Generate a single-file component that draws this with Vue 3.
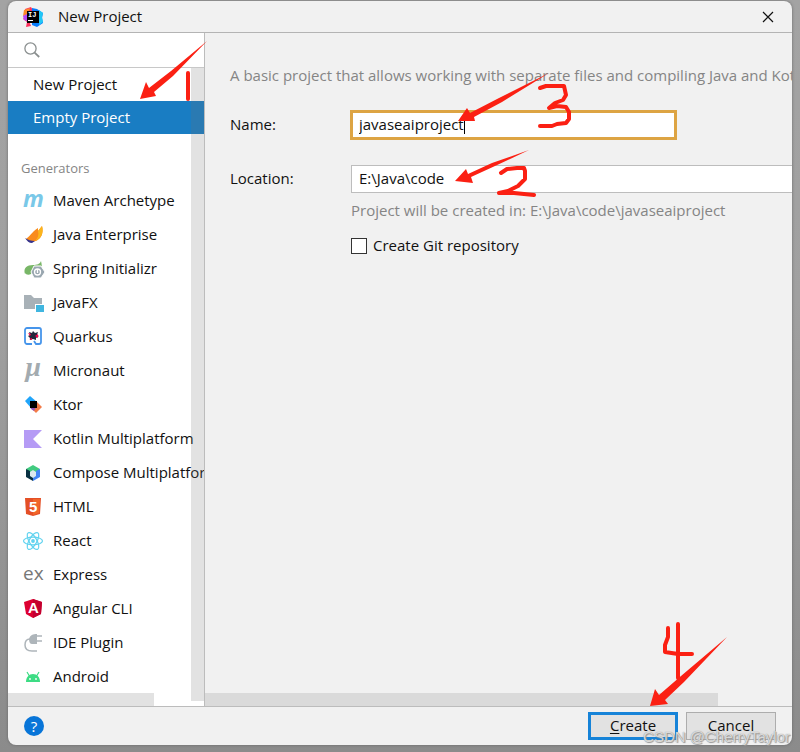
<template>
  <div class="desktop">
    <main class="window">
      <header class="titlebar">
        <svg class="app-logo" viewBox="0 0 20 20" aria-hidden="true">
          <path fill="#fe315d" d="M2 2 8 0l3 5-5 9 2 5-5 1 1-5-4-3 3-4z" />
          <path fill="#fc8a2c" d="M1 3 7 1 5 8 0 9z" />
          <path fill="#b74af7" d="M0 9 4 7v7l-3-1z" />
          <path fill="#087cfa" d="m9 1 5 1 6 4-1 5 1 5-6 4-5-2z" />
          <path fill="#21c7f5" d="m16 3 4 3-1 4 1 5-4 3z" />
          <path d="M4 4h12v12H4z" />
          <text x="5" y="10" font-size="7" font-weight="700" font-family="Liberation Mono, monospace" fill="#fff">IJ</text>
          <path fill="#fff" d="M5 13h5v1H5z" />
        </svg>
        <h1>New Project</h1>
        <button class="close" type="button" aria-label="Close">
          <svg viewBox="0 0 12 12"><path d="m1 1 10 10M11 1 1 11" fill="none" stroke="#111" stroke-width="1.2" /></svg>
        </button>
      </header>

      <div class="body">
        <aside class="sidebar">
          <label class="search">
            <svg viewBox="0 0 16 16" fill="none" stroke="#8a8f8f" stroke-width="1.3">
              <circle cx="6.5" cy="6.5" r="5.6" />
              <path d="m10.6 10.6 4.6 4.4" stroke-width="1.8" />
            </svg>
            <input v-model="query" type="text" aria-label="Search" />
          </label>
          <nav class="list">
            <button
              v-for="kind in kinds"
              :key="kind"
              type="button"
              :class="['kind', { selected: kind === current }]"
              @click="current = kind"
            >
              {{ kind }}
            </button>
            <h2>Generators</h2>
            <button v-for="item in generators" :key="item.name" class="generator" type="button" @click="current = item.name">
              <svg viewBox="0 0 20 20" aria-hidden="true" v-html="item.icon"></svg>
              <span>{{ item.name }}</span>
            </button>
            <i class="bar vertical"></i>
            <i class="bar horizontal"></i>
          </nav>
        </aside>

        <section class="content">
          <p class="hint intro">A basic project that allows working with separate files and compiling Java and Kotlin classes.</p>
          <form class="form" @submit.prevent>
            <label for="name">Name:</label>
            <div class="field name-field">
              <input id="name" v-model="name" type="text" />
              <i class="caret"></i>
            </div>
            <label for="location">Location:</label>
            <div class="field location-field">
              <input id="location" v-model="location" type="text" />
            </div>
            <p class="hint created">Project will be created in: {{ location }}\{{ name }}</p>
            <label class="git"><input v-model="git" type="checkbox" /><span>Create Git repository</span></label>
          </form>
          <i class="bar wide"></i>
        </section>
      </div>

      <footer class="footer">
        <button class="help" type="button" aria-label="Help">?</button>
        <div class="actions">
          <button class="action primary" type="button"><u>C</u>reate</button>
          <button class="action" type="button">Cancel</button>
          <svg class="note-create" viewBox="650 620 80 90" aria-hidden="true">
            <g class="pen">
              <path d="M668 628v9l-3 8v7l13 2h14M678 624v54" />
            </g>
            <path class="arrow" d="m650 706 5-17 4 6 22-19 46-39-43 45-19 18 3 4z" />
          </svg>
        </div>
      </footer>

      <svg class="notes" viewBox="0 0 600 220" aria-hidden="true">
        <g class="pen">
          <path d="M188 73v26" />
          <path d="m501 173 6-4 10-1h7l1 3v8l-7 7-10 5-9 2h15l20 2" />
          <path d="m540 88 6-2h18l2 9-3 5-8 3-6 5 8-2 9 1 3 5v7l-3 4-9 1-5 2h-12" />
        </g>
        <path class="arrow" d="m140 99 6-17 3 6 22-17 36-30-34 35-19 16 2 4z" />
        <path class="arrow" d="m455 181 11-12 2 5 24-11 37-13-34 16-24 11 2 6z" />
        <path class="arrow" d="m458 121 9-13 3 5 29-15 50-25-47 29-28 15 1 4z" />
      </svg>
    </main>
    <span class="watermark">CSDN @CherryTaylor</span>
  </div>
</template>

<script setup>
import { ref } from 'vue'

const query = ref('')
const name = ref('javaseaiproject')
const location = ref('E:\\Java\\code')
const git = ref(false)

const kinds = ['New Project', 'Empty Project']
const current = ref('Empty Project')

const generators = [
  {
    name: 'Maven Archetype',
    icon: '<text x="-1" y="16" font-size="23" font-style="italic" font-weight="700" font-family="Open Sans, sans-serif" fill="#79c8e8">m</text>',
  },
  {
    name: 'Java Enterprise',
    icon: '<path fill="#f98b1d" d="M2 14C7 10 10 5 14 3v3l4-5c2 7-1 13-6 15-4 1-7 0-10-2z"/><path fill="#fbb51c" d="m14 6 4-5c2 7-1 13-7 15 3-3 4-6 3-10z"/><path fill="#35328c" d="M1 13c3 2 6 3 10 3l-3 2c-3 0-5-2-7-5z"/>',
  },
  {
    name: 'Spring Initializr',
    icon: '<path fill="#78b667" d="M1 15C-1 9 3 6 9 6c4 0 7-1 8-4 1 4 1 6 0 8l-6-1-4 6c-2 1-5 1-6-1z"/><path fill="#9aa7b0" stroke="#fff" d="m10 7h7l4 6-4 6h-7l-3-6z"/><circle cx="13.5" cy="13" r="3" fill="none" stroke="#fff" stroke-width="1.3"/><path stroke="#fff" stroke-width="1.4" d="M13.5 10v4"/>',
  },
  {
    name: 'JavaFX',
    icon: '<path fill="#a8b1b7" d="M0 2h7l3 3h8v6h-7v5H0z"/><path fill="#40b6e0" d="M12 12h8v7h-8z"/>',
  },
  {
    name: 'Quarkus',
    icon: '<path fill="none" stroke="#4695eb" stroke-width="1.8" d="M8 17H3c-1 0-2-1-2-2V3c0-1 1-2 2-2h12c1 0 2 1 2 2v12c0 1-1 2-2 2h-3l-2-3"/><path fill="#25283d" d="m9 4 2 2 3-1-1 3 2 1-3 2v2l-3-1-3 1v-2L4 9l2-1-1-3 3 1z"/><path fill="#ff004a" d="M4 6l3 1-1 2zM14 7v4l-3-2zM5 12l3-1v2z"/>',
  },
  {
    name: 'Micronaut',
    icon: '<text x="1" y="15" font-size="28" font-style="italic" font-weight="700" font-family="Liberation Serif, serif" fill="#a3abb0">µ</text>',
  },
  {
    name: 'Ktor',
    icon: '<path fill="#21a5fa" d="m1 6 5-5 7 6-6 6z"/><path fill="#f47b48" d="m7 13 6-6 5 5-6 6z"/><path fill="#9254b9" d="m6 12 1 2 3 2 2-4z"/><path d="M6 6h7v7H6z"/>',
  },
  {
    name: 'Kotlin Multiplatform',
    icon: '<path fill="#b59bf5" d="M0 1h18l-9 9 9 9H0z"/>',
  },
  {
    name: 'Compose Multiplatform',
    icon: '<path fill="#42cb80" d="m9 2 7 4-3 4-4-2-4 2-3-4z"/><path fill="#083042" d="m2 6 4 2v4l3 2v4l-7-4z"/><path fill="#4285f4" d="m16 6-4 2v4l-3 2v4l7-4z"/><path fill="#dce9ef" d="m9 7 3 2v4l-3 2-3-2V9z"/>',
  },
  {
    name: 'HTML',
    icon: '<path fill="#e44f26" d="M1 1h16l-1 16-7 2-7-2z"/><path fill="#f16529" d="M9 2h7l-1 14-6 2z"/><text x="5" y="15" font-size="15" font-weight="700" font-family="Liberation Sans, sans-serif" fill="#fff">5</text>',
  },
  {
    name: 'React',
    icon: '<g fill="none" stroke="#61d3ef" stroke-width="1.2"><ellipse cx="9" cy="10" rx="9.5" ry="3.8"/><ellipse cx="9" cy="10" rx="9.5" ry="3.8" transform="rotate(60 9 10)"/><ellipse cx="9" cy="10" rx="9.5" ry="3.8" transform="rotate(120 9 10)"/></g><circle cx="9" cy="10" r="1.9" fill="#61d3ef"/>',
  },
  {
    name: 'Express',
    icon: '<text x="-1" y="15" font-size="19" font-family="Open Sans, sans-serif" fill="#777">ex</text>',
  },
  {
    name: 'Angular CLI',
    icon: '<path fill="#dd0031" d="m9 0 9 3-1 12-8 4-7-4L0 3z"/><path fill="#c3002f" d="m9 0 9 3-1 12-8 4z"/><text x="4" y="14" font-size="15" font-weight="700" font-family="Liberation Sans, sans-serif" fill="#fff">A</text>',
  },
  {
    name: 'IDE Plugin',
    icon: '<path fill="#aeb5ba" d="M5 6c1-4 4-5 8-5v10H8c-2 0-3-2-3-5z"/><path fill="none" stroke="#aeb5ba" stroke-width="1.5" d="M13 3h5M13 8h5M6 6C3 6 1 8 1 12c0 4 3 6 7 6h5"/>',
  },
  {
    name: 'Android',
    icon: '<path fill="#3ddc84" d="M2 15c0-5 3-8 7-8s7 3 7 8z"/><path stroke="#3ddc84" stroke-width="1.2" d="m3 5 3 5M15 5l-3 5"/><circle cx="6" cy="12" r=".9" fill="#fff"/><circle cx="12" cy="12" r=".9" fill="#fff"/>',
  },
]
</script>

<style>
body {
  margin: 0;
}
</style>

<style scoped>
.desktop {
  box-sizing: border-box;
  position: relative;
  display: flex;
  min-height: 100vh;
  padding: 1px 8px 7px;
  background: linear-gradient(#a3a3a3, #a0a0a0 40%, #8b8b8b);
  font-family: "Open Sans", "Noto Sans", sans-serif;
  font-size: 15px;
  line-height: 20px;
  color: #111;
}

button,
input {
  font: inherit;
  color: inherit;
}

button {
  margin: 0;
  padding: 0;
  border: 0;
  background: none;
}

h1,
h2,
p {
  margin: 0;
  font-size: inherit;
  font-weight: 400;
}

h1,
.generator span,
.git span,
.form label[for] {
  padding-bottom: 2px;
}

.window {
  position: relative;
  flex: 1;
  min-width: 0;
  display: flex;
  flex-direction: column;
  border-radius: 8px;
  background: #f1f1f1;
  box-shadow: 0 0 3px #666;
}

.titlebar {
  display: flex;
  align-items: center;
  height: 31px;
  padding: 0 18px 0 15px;
  border-bottom: 1px solid #b4b4b4;
}

.app-logo {
  width: 20px;
  height: 20px;
  margin-right: 15px;
}

.close {
  display: flex;
  margin-left: auto;
}

.close svg {
  width: 12px;
  height: 12px;
}

.body {
  flex: 1;
  display: flex;
}

.sidebar {
  flex: none;
  display: flex;
  flex-direction: column;
  width: 196px;
  border-right: 1px solid #bcbcbc;
  background: #fff;
}

.search {
  display: flex;
  align-items: center;
  gap: 8px;
  height: 34px;
  padding: 0 16px;
  border-bottom: 1px solid #c8c8c8;
}

.search svg {
  flex: none;
  width: 16px;
  height: 16px;
}

.search input {
  width: 100%;
  min-width: 0;
  padding: 0;
  border: 0;
  outline: 0;
}

.list {
  position: relative;
  flex: 1;
  display: flex;
  flex-direction: column;
  padding-bottom: 12px;
  overflow: hidden;
}

.kind {
  flex: none;
  height: 33px;
  padding: 0 0 2px 25px;
  text-align: left;
}

.kind.selected {
  background: #197dc3;
  color: #fff;
}

h2 {
  flex: none;
  padding: 24px 13px 6px;
  font-size: 13px;
  color: #858585;
}

.generator {
  flex: none;
  display: flex;
  align-items: center;
  gap: 9px;
  height: 34px;
  padding-left: 16px;
  white-space: nowrap;
}

.generator svg {
  flex: none;
  width: 20px;
  height: 20px;
  overflow: visible;
}

.bar {
  position: absolute;
  background: rgba(110, 110, 110, 0.2);
}

.bar.vertical {
  top: 0;
  right: 0;
  bottom: 5px;
  width: 13px;
}

.bar.horizontal {
  left: 0;
  bottom: 0;
  width: 146px;
  height: 13px;
}

.bar.wide {
  left: 0;
  right: 74px;
  bottom: 0;
  height: 13px;
  background: #dadada;
}

.content {
  position: relative;
  flex: 1;
  min-width: 0;
  padding: 32px 0 0 25px;
  overflow: hidden;
}

.hint {
  color: #858585;
  white-space: nowrap;
}

.intro {
  margin-bottom: 25px;
}

.form {
  display: grid;
  grid-template-columns: 120px 1fr;
  align-items: center;
}

.field {
  box-sizing: border-box;
  position: relative;
  display: flex;
  background: #fff;
}

.field input {
  width: 100%;
  min-width: 0;
  padding: 0 0 2px;
  border: 0;
  outline: 0;
  background: none;
}

.name-field {
  width: 327px;
  max-width: 100%;
  height: 30px;
  padding: 0 6px;
  border: 3px solid #dda443;
}

.caret {
  position: absolute;
  top: 2px;
  left: 111px;
  width: 1px;
  height: 19px;
  background: #000;
}

.location-field {
  height: 28px;
  margin: 25px 0 7px 1px;
  padding: 0 7px;
  border: 1px solid #bdbdbd;
  border-right: 0;
}

.form label[for="location"] {
  margin-top: 17px;
}

.created,
.git {
  grid-column: 2;
  margin-left: 1px;
}

.git {
  display: flex;
  align-items: center;
  gap: 6px;
  margin-top: 15px;
}

.git input {
  appearance: none;
  width: 16px;
  height: 16px;
  margin: 0;
  border: 1px solid #333;
  background: #fff;
}

.git input:checked {
  background: #197dc3;
}

.footer {
  display: flex;
  align-items: center;
  justify-content: space-between;
  height: 38px;
  padding: 0 16px;
  border-top: 1px solid #bcbcbc;
}

.help {
  width: 20px;
  height: 20px;
  border-radius: 50%;
  background: #0875d8;
  color: #fff;
}

.actions {
  position: relative;
  display: flex;
  gap: 8px;
}

.action {
  box-sizing: border-box;
  width: 90px;
  height: 28px;
  padding-bottom: 2px;
  border: 1px solid #adadad;
  background: #e2e2e2;
}

.action.primary {
  border: 3px solid #1683d8;
}

u {
  text-underline-offset: 2px;
}

.notes,
.note-create {
  position: absolute;
  pointer-events: none;
}

.notes {
  top: -1px;
  left: -8px;
  width: 600px;
  height: 220px;
}

.note-create {
  right: 46px;
  bottom: 30px;
  width: 80px;
  height: 90px;
}

.pen {
  fill: none;
  stroke: #fb2013;
  stroke-width: 4;
  stroke-linecap: round;
  stroke-linejoin: round;
}

.arrow {
  fill: #fb2013;
}

.watermark {
  position: absolute;
  right: 10px;
  bottom: 5px;
  color: rgba(255, 255, 255, 0.7);
  font-family: "Liberation Sans", Arial, sans-serif;
  font-size: 15px;
  text-shadow: 0 0 1px #777, 1px 1px 1px #999;
  pointer-events: none;
}
</style>
